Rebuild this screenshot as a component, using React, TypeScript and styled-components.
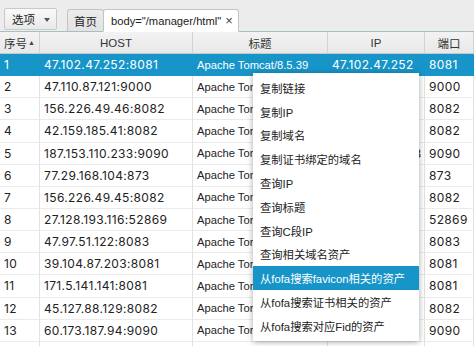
import React from "react";
import styled, { createGlobalStyle } from "styled-components";

const Global = createGlobalStyle`
  html, body { margin: 0; padding: 0; background: #ffffff; overflow: hidden; }
  body { font-family: "Liberation Sans", "Noto Sans CJK SC", sans-serif; }
`;

const Page = styled.div`
  width: 474px;
  height: 346px;
  display: flex;
  flex-direction: column;
  position: relative;
  overflow: hidden;
  font-size: 12px;
  color: #222;
`;

const TopBar = styled.div`
  flex: 0 0 32px;
  height: 32px;
  box-sizing: border-box;
  background: #ececec;
  border-bottom: 1px solid #a9bdc4;
  display: flex;
  align-items: flex-end;
  padding-left: 4px;
`;

const OptionButton = styled.div`
  width: 53px;
  height: 22px;
  margin-bottom: 1px;
  box-sizing: border-box;
  border: 1px solid #c9c9c9;
  border-radius: 2px;
  background: linear-gradient(#f9f9f9, #e9e9e9);
  display: flex;
  align-items: center;
  padding-left: 7px;
  gap: 9px;
  font-size: 11.5px;
  color: #222;
`;

const Caret = styled.span`
  width: 0;
  height: 0;
  border-left: 3.5px solid transparent;
  border-right: 3.5px solid transparent;
  border-top: 4px solid #555;
  margin-top: 1px;
`;

const Tabs = styled.div`
  display: flex;
  margin-left: 10px;
  height: 23px;
  margin-bottom: -1px;
`;

const Tab = styled.div<{ $active?: boolean }>`
  box-sizing: border-box;
  height: 23px;
  border: 1px solid #c4c4c4;
  border-bottom: ${(p) => (p.$active ? "1px solid #fff" : "1px solid #a9bdc4")};
  border-radius: 3px 3px 0 0;
  background: ${(p) => (p.$active ? "#ffffff" : "linear-gradient(#ececec, #e2e2e2)")};
  padding: 0 ${(p) => (p.$active ? "5px 0 7px" : "6px")};
  display: flex;
  align-items: center;
  gap: 4px;
  font-size: ${(p) => (p.$active ? "11.2px" : "11.5px")};
  color: #222;
  margin-left: ${(p) => (p.$active ? "-1px" : "0")};
`;

const Close = styled.span`
  font-size: 13px;
  color: #444;
  line-height: 1;
`;

const Grid = styled.div`
  flex: 0 0 auto;
  display: grid;
  grid-template-columns: 40px 153px 135px 97px 1fr;
`;

const HeadCell = styled.div<{ $left?: boolean }>`
  height: 22px;
  box-sizing: border-box;
  background: linear-gradient(#f3f3f3, #e8e8e8);
  border-right: 1px solid #d2d2d2;
  border-bottom: 1px solid #c8c8c8;
  display: flex;
  align-items: center;
  justify-content: ${(p) => (p.$left ? "flex-start" : "center")};
  padding-left: ${(p) => (p.$left ? "4px" : "0")};
  font-size: 11.5px;
  color: #333;
  &:last-child { border-right: none; }
`;

const SortMark = styled.span`
  font-size: 7px;
  margin-left: 1px;
  color: #444;
`;

const Cell = styled.div<{ $sel?: boolean; $num?: boolean }>`
  height: 22.15px;
  box-sizing: border-box;
  background: ${(p) => (p.$sel ? "#1795c9" : "#ffffff")};
  color: ${(p) => (p.$sel ? "#ffffff" : "#222")};
  border-right: 1px solid ${(p) => (p.$sel ? "#1795c9" : "#e2e2e2")};
  border-bottom: 1px solid ${(p) => (p.$sel ? "#1795c9" : "#ebebeb")};
  padding-left: 4px;
  display: flex;
  align-items: center;
  white-space: nowrap;
  overflow: hidden;
  font-family: ${(p) => (p.$num ? '"Inter", sans-serif' : '"Liberation Sans", sans-serif')};
  font-size: ${(p) => (p.$num ? "12px" : "11.2px")};
  letter-spacing: ${(p) => (p.$num ? "0.35px" : "0")};
`;

const Menu = styled.div`
  position: absolute;
  left: 253px;
  top: 73px;
  width: 166px;
  background: #ffffff;
  box-shadow: 0 1px 6px rgba(0, 0, 0, 0.35);
  padding: 3px 0 3px;
  display: flex;
  flex-direction: column;
`;

const MenuItem = styled.div<{ $hl?: boolean }>`
  height: 23.8px;
  display: flex;
  align-items: center;
  padding-left: 7px;
  font-size: 11.3px;
  color: ${(p) => (p.$hl ? "#ffffff" : "#222")};
  background: ${(p) => (p.$hl ? "#1795c9" : "transparent")};
  white-space: nowrap;
`;

const rows: [string, string, string][] = [
  ["47.102.47.252", "8081", "1"],
  ["47.110.87.121", "9000", "2"],
  ["156.226.49.46", "8082", "3"],
  ["42.159.185.41", "8082", "4"],
  ["187.153.110.233", "9090", "5"],
  ["77.29.168.104", "873", "6"],
  ["156.226.49.45", "8082", "7"],
  ["27.128.193.116", "52869", "8"],
  ["47.97.51.122", "8083", "9"],
  ["39.104.87.203", "8081", "10"],
  ["171.5.141.141", "8081", "11"],
  ["45.127.88.129", "8082", "12"],
  ["60.173.187.94", "9090", "13"],
  ["", "", ""],
];

const menuItems = [
  "复制链接",
  "复制IP",
  "复制域名",
  "复制证书绑定的域名",
  "查询IP",
  "查询标题",
  "查询C段IP",
  "查询相关域名资产",
  "从fofa搜索favicon相关的资产",
  "从fofa搜索证书相关的资产",
  "从fofa搜索对应Fid的资产",
];

export default function App() {
  return (
    <Page>
      <Global />
      <TopBar>
        <OptionButton>
          选项 <Caret />
        </OptionButton>
        <Tabs>
          <Tab>首页</Tab>
          <Tab $active>
            body="/manager/html" <Close>×</Close>
          </Tab>
        </Tabs>
      </TopBar>
      <Grid>
        <HeadCell $left>
          序号<SortMark>▲</SortMark>
        </HeadCell>
        <HeadCell>HOST</HeadCell>
        <HeadCell>标题</HeadCell>
        <HeadCell>IP</HeadCell>
        <HeadCell>端口</HeadCell>
        {rows.map(([ip, port, n], i) => {
          const sel = i === 0;
          const empty = n === "";
          return (
            <React.Fragment key={i}>
              <Cell $sel={sel} $num>{n}</Cell>
              <Cell $sel={sel} $num>{empty ? "" : `${ip}:${port}`}</Cell>
              <Cell $sel={sel}>{empty ? "" : "Apache Tomcat/8.5.39"}</Cell>
              <Cell $sel={sel} $num>{ip}</Cell>
              <Cell $sel={sel} $num>{port}</Cell>
            </React.Fragment>
          );
        })}
      </Grid>
      <Menu>
        {menuItems.map((m, i) => (
          <MenuItem key={m} $hl={i === 8}>
            {m}
          </MenuItem>
        ))}
      </Menu>
    </Page>
  );
}
